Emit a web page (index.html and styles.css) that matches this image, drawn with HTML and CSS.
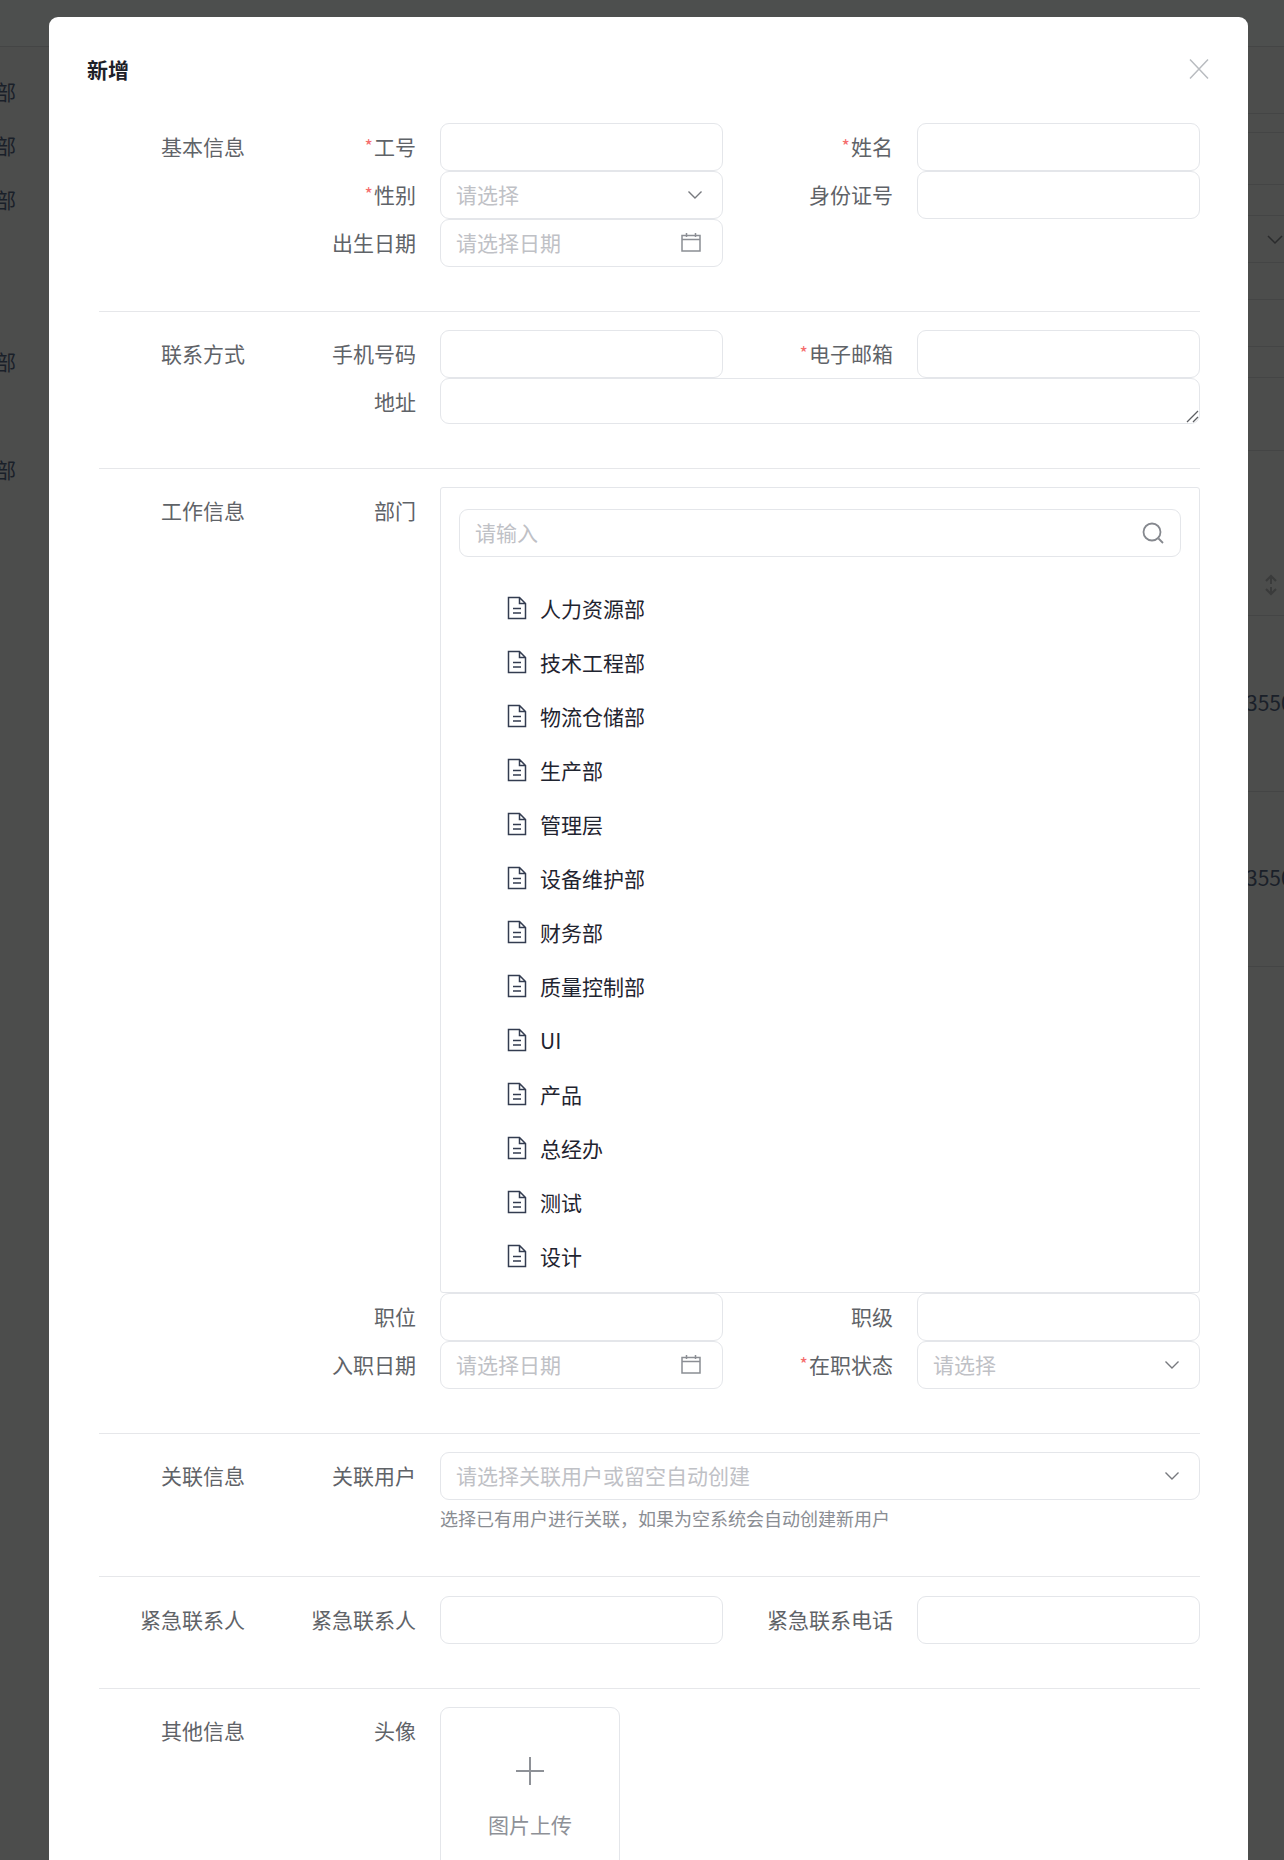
FILE: index.html
```html
<!DOCTYPE html>
<html lang="zh-CN">
<head>
    <meta charset="UTF-8">
    <meta name="viewport" content="width=device-width, initial-scale=1.0">
    <title>新增</title>
    <link rel="stylesheet" href="styles.css">
</head>
<body>
    <!-- Shared icons -->
    <svg class="sprites" width="0" height="0">
        <symbol id="i-chevron" viewBox="0 0 18 18"><path d="M2.500 5.500 9 12l6.500-6.500" fill="none" stroke="currentColor" stroke-width="1.400"/></symbol>
        <symbol id="i-calendar" viewBox="0 0 22 22"><path d="M2 4.500h18v15.500H2zM2 8.500h18M6.500 2v4M15.500 2v4" fill="none" stroke="currentColor" stroke-width="1.500"/></symbol>
        <symbol id="i-doc" viewBox="0 0 20 24"><path d="M1.500 1.500h11l6 6v15h-17zM12.500 1.500v6h6M6 12.500h8M6 17h8" fill="none" stroke="currentColor" stroke-width="1.500"/></symbol>
    </svg>

    <!-- Page behind the dialog -->
    <svg class="backdrop" width="1284" height="1860" viewBox="0 0 1284 1860">
        <rect class="backdrop-top" width="1284" height="46"/>
        <g class="backdrop-lines">
            <path d="M0 46.500H1284M1248 113.500H1284M1248 132.500H1284M1248 184.500H1284M1248 215.500H1284M1248 262.500H1284M1248 299.500H1284M1248 346.500H1284M1248 377.500H1284M1248 450.500H1284M1248 615.500H1284M1248 791.500H1284M1248 966.500H1284"/>
        </g>
        <path class="backdrop-icon" d="M1268 236l7 7 7-7" />
        <path class="backdrop-sort" d="M1266 581l5-5 5 5M1271 577v7M1266 589l5 5 5-5M1271 593v-6"/>
        <g class="backdrop-text">
            <text x="-5" y="100">部</text>
            <text x="-5" y="154">部</text>
            <text x="-5" y="208">部</text>
            <text x="-5" y="370">部</text>
            <text x="-5" y="478">部</text>
            <text x="1246" y="711">3550</text>
            <text x="1246" y="886">3550</text>
        </g>
    </svg>

    <div class="modal">
        <div class="modal-header">
            <h2 class="modal-title">新增</h2>
            <svg class="modal-close" width="24" height="24" viewBox="0 0 24 24"><path d="M3 2.500l18 19M21 2.500l-18 19" fill="none" stroke="currentColor" stroke-width="1.500"/></svg>
        </div>

        <form class="form">
            <!-- 基本信息 -->
            <section class="section">
                <div class="section-name">基本信息</div>
                <div class="fields">
                    <label class="field-label"><i>*</i>工号</label>
                    <input class="control" type="text">
                    <label class="field-label"><i>*</i>姓名</label>
                    <input class="control" type="text">
                    <label class="field-label"><i>*</i>性别</label>
                    <div class="picker">
                        <input class="control" type="text" placeholder="请选择">
                        <svg class="icon-chevron"><use href="#i-chevron"/></svg>
                    </div>
                    <label class="field-label">身份证号</label>
                    <input class="control" type="text">
                    <label class="field-label">出生日期</label>
                    <div class="picker">
                        <input class="control" type="text" placeholder="请选择日期">
                        <svg class="icon-calendar"><use href="#i-calendar"/></svg>
                    </div>
                </div>
            </section>

            <!-- 联系方式 -->
            <section class="section section-contact">
                <div class="section-name">联系方式</div>
                <div class="fields">
                    <label class="field-label">手机号码</label>
                    <input class="control" type="text">
                    <label class="field-label"><i>*</i>电子邮箱</label>
                    <input class="control" type="text">
                    <label class="field-label">地址</label>
                    <div class="area-wrap span-all">
                        <textarea class="control control-area"></textarea>
                        <svg class="icon-resize" width="13" height="13" viewBox="0 0 13 13"><path d="M1 12 12 1M7 12l5-5" fill="none" stroke="currentColor" stroke-width="1.300"/></svg>
                    </div>
                </div>
            </section>

            <!-- 工作信息 -->
            <section class="section section-work">
                <div class="section-name">工作信息</div>
                <div class="fields">
                    <label class="field-label">部门</label>
                    <div class="tree-box span-all">
                        <div class="picker">
                            <input class="control" type="text" placeholder="请输入">
                            <svg class="icon-search" width="26" height="26" viewBox="0 0 26 26"><circle cx="12" cy="12" r="8.500" fill="none" stroke="currentColor" stroke-width="1.800"/><path d="M18.500 18.500l4.500 4.500" stroke="currentColor" stroke-width="1.800"/></svg>
                        </div>
                        <ul class="tree">
                            <li><svg class="icon-doc"><use href="#i-doc"/></svg>人力资源部</li>
                            <li><svg class="icon-doc"><use href="#i-doc"/></svg>技术工程部</li>
                            <li><svg class="icon-doc"><use href="#i-doc"/></svg>物流仓储部</li>
                            <li><svg class="icon-doc"><use href="#i-doc"/></svg>生产部</li>
                            <li><svg class="icon-doc"><use href="#i-doc"/></svg>管理层</li>
                            <li><svg class="icon-doc"><use href="#i-doc"/></svg>设备维护部</li>
                            <li><svg class="icon-doc"><use href="#i-doc"/></svg>财务部</li>
                            <li><svg class="icon-doc"><use href="#i-doc"/></svg>质量控制部</li>
                            <li><svg class="icon-doc"><use href="#i-doc"/></svg>UI</li>
                            <li><svg class="icon-doc"><use href="#i-doc"/></svg>产品</li>
                            <li><svg class="icon-doc"><use href="#i-doc"/></svg>总经办</li>
                            <li><svg class="icon-doc"><use href="#i-doc"/></svg>测试</li>
                            <li><svg class="icon-doc"><use href="#i-doc"/></svg>设计</li>
                        </ul>
                    </div>
                    <label class="field-label">职位</label>
                    <input class="control" type="text">
                    <label class="field-label">职级</label>
                    <input class="control" type="text">
                    <label class="field-label">入职日期</label>
                    <div class="picker">
                        <input class="control" type="text" placeholder="请选择日期">
                        <svg class="icon-calendar"><use href="#i-calendar"/></svg>
                    </div>
                    <label class="field-label"><i>*</i>在职状态</label>
                    <div class="picker">
                        <input class="control" type="text" placeholder="请选择">
                        <svg class="icon-chevron"><use href="#i-chevron"/></svg>
                    </div>
                </div>
            </section>

            <!-- 关联信息 -->
            <section class="section section-link">
                <div class="section-name">关联信息</div>
                <div class="fields">
                    <label class="field-label">关联用户</label>
                    <div class="picker span-all">
                        <input class="control" type="text" placeholder="请选择关联用户或留空自动创建">
                        <svg class="icon-chevron"><use href="#i-chevron"/></svg>
                    </div>
                    <p class="hint span-all">选择已有用户进行关联，如果为空系统会自动创建新用户</p>
                </div>
            </section>

            <!-- 紧急联系人 -->
            <section class="section section-emergency">
                <div class="section-name">紧急联系人</div>
                <div class="fields">
                    <label class="field-label">紧急联系人</label>
                    <input class="control" type="text">
                    <label class="field-label">紧急联系电话</label>
                    <input class="control" type="text">
                </div>
            </section>

            <!-- 其他信息 -->
            <section class="section section-other">
                <div class="section-name">其他信息</div>
                <div class="fields">
                    <label class="field-label">头像</label>
                    <div class="upload">
                        <svg class="upload-plus" width="30" height="30" viewBox="0 0 30 30"><path d="M15 1v28M1 15h28" stroke="currentColor" stroke-width="2"/></svg>
                        <span>图片上传</span>
                    </div>
                </div>
            </section>
        </form>
    </div>
</body>
</html>
```

FILE: styles.css
```css
* {
    margin: 0;
    padding: 0;
    box-sizing: border-box;
}

html, body {
    height: 1860px;
    overflow: hidden;
}

body {
    position: relative;
    background-color: #4c4d4c;
    font-family: "Noto Sans CJK SC", "Noto Sans", sans-serif;
    font-size: 21px;
    color: #5f6368;
}

.sprites {
    position: absolute;
}

/* Page behind the dialog */
.backdrop {
    position: absolute;
    top: 0;
    left: 0;
}

.backdrop-top {
    fill: #4d4f4e;
}

.backdrop-lines path {
    stroke: #444545;
    stroke-width: 1;
}

.backdrop-icon {
    fill: none;
    stroke: #2a2b2c;
    stroke-width: 1.500;
}

.backdrop-sort {
    fill: none;
    stroke: #3a3b3b;
    stroke-width: 2;
}

.backdrop-text {
    font-size: 21px;
    fill: #1a2029;
}

/* Dialog */
.modal {
    position: absolute;
    top: 17px;
    left: 49px;
    width: 1199px;
    height: 1900px;
    background-color: #fff;
    border-radius: 9px;
}

.modal-header {
    display: flex;
    justify-content: space-between;
    align-items: center;
    padding: 19px 37px 2px 38px;
    height: 86px;
}

.modal-title {
    font-size: 21px;
    line-height: 30px;
    font-weight: 700;
    color: #1d2129;
}

.modal-close {
    color: #b9bcc0;
}

.form {
    padding: 20px 48px 0 50px;
}

/* Sections */
.section {
    display: flex;
    padding-bottom: 44px;
    border-bottom: 1px solid #e6e7ea;
}

.section-contact {
    padding-top: 18px;
    padding-bottom: 42px;
}

.section-work {
    padding-top: 18px;
}

.section-link {
    padding-top: 18px;
    padding-bottom: 44px;
}

.section-emergency {
    padding-top: 19px;
    padding-bottom: 44px;
}

.section-other {
    padding-top: 18px;
    border-bottom: 0;
}

.section-name {
    width: 147px;
    height: 48px;
    line-height: 46px;
    text-align: right;
    white-space: nowrap;
}

.fields {
    display: grid;
    grid-template-columns: 195px 283px 194px 283px;
    grid-auto-rows: min-content;
}

.field-label {
    height: 48px;
    line-height: 46px;
    padding-right: 24px;
    text-align: right;
    white-space: nowrap;
}

.field-label i {
    font-style: normal;
    color: #f56c6c;
    font-size: 18px;
    position: relative;
    top: -2px;
    margin-right: 1px;
}

.span-all {
    grid-column: 2 / -1;
}

/* Inputs */
.control {
    display: block;
    width: 100%;
    height: 48px;
    padding: 0 15px 2px;
    border: 1px solid #e4e6ea;
    border-radius: 9px;
    background-color: #fff;
    font-family: inherit;
    font-size: 21px;
    color: #1d2129;
    outline: none;
}

.control::placeholder {
    color: #bfc1c6;
    opacity: 1;
}

.control-area {
    height: 46px;
    resize: none;
}

.area-wrap {
    position: relative;
    height: 46px;
}

.icon-resize {
    position: absolute;
    right: 1px;
    bottom: 1px;
    color: #5c5e62;
}

.picker {
    position: relative;
    height: 48px;
}

.icon-chevron {
    position: absolute;
    top: 15px;
    right: 19px;
    width: 18px;
    height: 18px;
    color: #77797e;
}

.icon-calendar {
    position: absolute;
    top: 12px;
    right: 21px;
    width: 22px;
    height: 22px;
    color: #8b8e94;
}

.icon-search {
    position: absolute;
    top: 11px;
    right: 15px;
    color: #85888e;
}

/* Department tree */
.tree-box {
    height: 806px;
    padding: 21px 18px 0 18px;
    border: 1px solid #e4e6ea;
    border-radius: 3px;
}

.tree {
    list-style: none;
    padding-top: 24px;
}

.tree li {
    display: flex;
    align-items: center;
    height: 54px;
    padding-left: 48px;
    color: #1f2430;
}

.icon-doc {
    width: 20px;
    height: 24px;
    margin-right: 13px;
    color: #333c50;
}

/* Misc */
.hint {
    margin-top: 5px;
    height: 27px;
    line-height: 27px;
    font-size: 18px;
    color: #8a8d93;
}

.upload {
    display: flex;
    flex-direction: column;
    align-items: center;
    width: 180px;
    height: 180px;
    padding-top: 48px;
    border: 1px solid #e4e6ea;
    border-radius: 9px;
    color: #8e9197;
}

.upload span {
    margin-top: 23px;
}
```
